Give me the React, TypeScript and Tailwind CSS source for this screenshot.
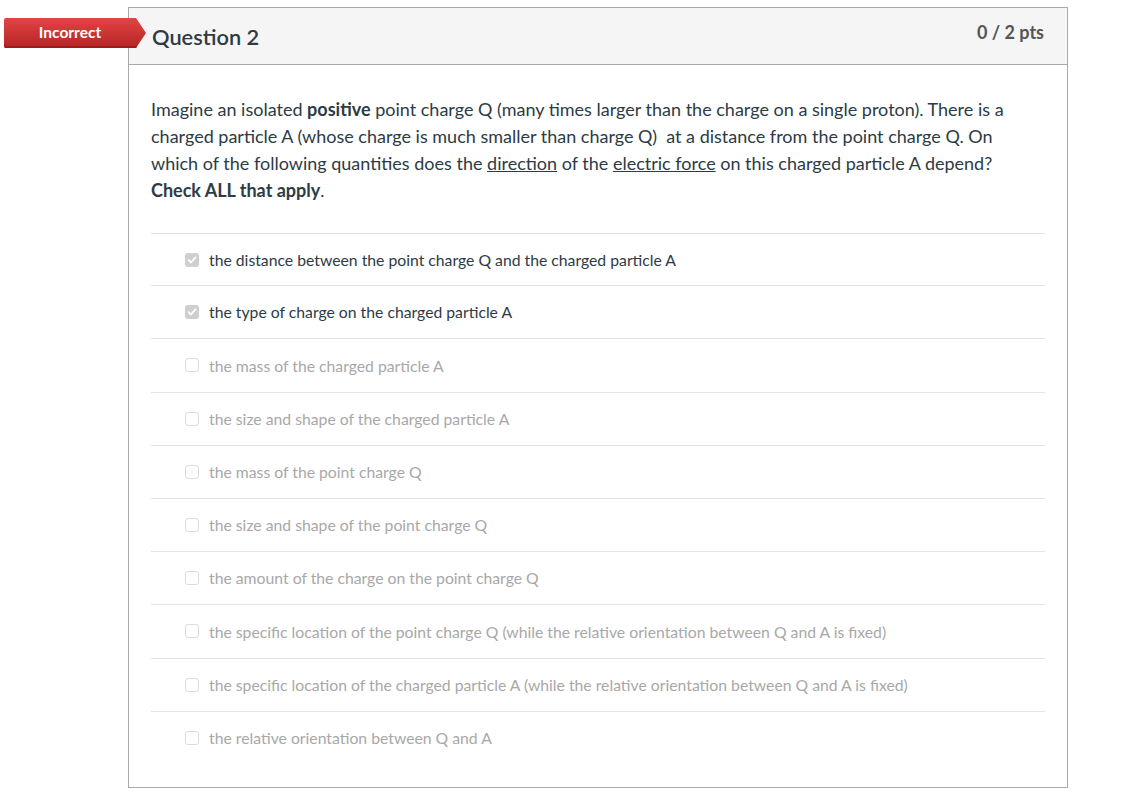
const answers = [
  { text: "the distance between the point charge Q and the charged particle A", checked: true },
  { text: "the type of charge on the charged particle A", checked: true },
  { text: "the mass of the charged particle A", checked: false },
  { text: "the size and shape of the charged particle A", checked: false },
  { text: "the mass of the point charge Q", checked: false },
  { text: "the size and shape of the point charge Q", checked: false },
  { text: "the amount of the charge on the point charge Q", checked: false },
  {
    text: "the specific location of the point charge Q (while the relative orientation between Q and A is fixed)",
    checked: false,
  },
  {
    text: "the specific location of the charged particle A (while the relative orientation between Q and A is fixed)",
    checked: false,
  },
  { text: "the relative orientation between Q and A", checked: false },
]

function Checkbox({ checked }: { checked: boolean }) {
  if (checked) {
    return (
      <span className="flex h-[14px] w-[14px] shrink-0 items-center justify-center rounded-[3px] bg-[#cfcfcf]">
        <svg width="10" height="10" viewBox="0 0 10 10">
          <path d="M1.6 5.2 L4 7.5 L8.5 2.4" fill="none" stroke="#fff" strokeWidth="1.8" strokeLinecap="round" strokeLinejoin="round" />
        </svg>
      </span>
    )
  }
  return <span className="block h-[14px] w-[14px] shrink-0 rounded-[3px] border border-[#dcdcdc] bg-white" />
}

export default function App() {
  return (
    <div className="relative min-h-[803px] bg-white pt-[7px] font-['Lato','Noto_Sans',sans-serif]">
      <div className="absolute left-[4px] top-[18px] flex h-[30px] w-[142px] items-center rounded-l-[2px] bg-gradient-to-b from-[#e34444] to-[#b52424] shadow-[inset_0_-2px_0_#9b1c1c] [clip-path:polygon(0_0,132px_0,142px_50%,132px_100%,0_100%)]">
        <span className="w-[132px] text-center text-[15.5px] font-bold text-white">Incorrect</span>
      </div>

      <div className="ml-[128px] w-[940px] border border-[#aaaaaa]">
        <div className="flex h-[57px] items-start justify-between border-b border-[#aaaaaa] bg-[#f5f5f5] px-[23px]">
          <h2 className="mt-[15px] text-[21.8px] font-semibold leading-[28px] text-[#2d3b45]">Question 2</h2>
          <div className="mt-[12px] text-[18px] font-bold leading-[24px] text-[#555]">0 / 2 pts</div>
        </div>

        <div className="px-[22px] pb-[22px] pt-[31px]">
          <p className="pr-[2px] text-[18px] leading-[27px] text-[#2d3b45]">
            Imagine an isolated <strong className="font-bold">positive</strong> point charge Q (many times larger than the
            charge on a single proton). There is a charged particle A (whose charge is much smaller than charge Q)&nbsp; at a
            distance from the point charge Q. On which of the following quantities does the{" "}
            <span className="underline">direction</span> of the <span className="underline">electric force</span> on this
            charged particle A depend?
            <br />
            <strong className="font-bold">Check ALL that apply</strong>.
          </p>

          <div className="mt-[29px]">
            {answers.map((a, i) => (
              <div
                key={i}
                className={`flex h-[53.2px] items-center gap-[10px] pl-[34px] ${
                  i === 0 ? "border-t border-[#e3e3e3]" : ""
                } ${i < answers.length - 1 ? "border-b border-[#e3e3e3]" : ""}`}
              >
                <Checkbox checked={a.checked} />
                <span className={`text-[15.75px] ${a.checked ? "text-[#2d3b45]" : "text-[#a8a8a8]"}`}>{a.text}</span>
              </div>
            ))}
          </div>
        </div>
      </div>
    </div>
  )
}
